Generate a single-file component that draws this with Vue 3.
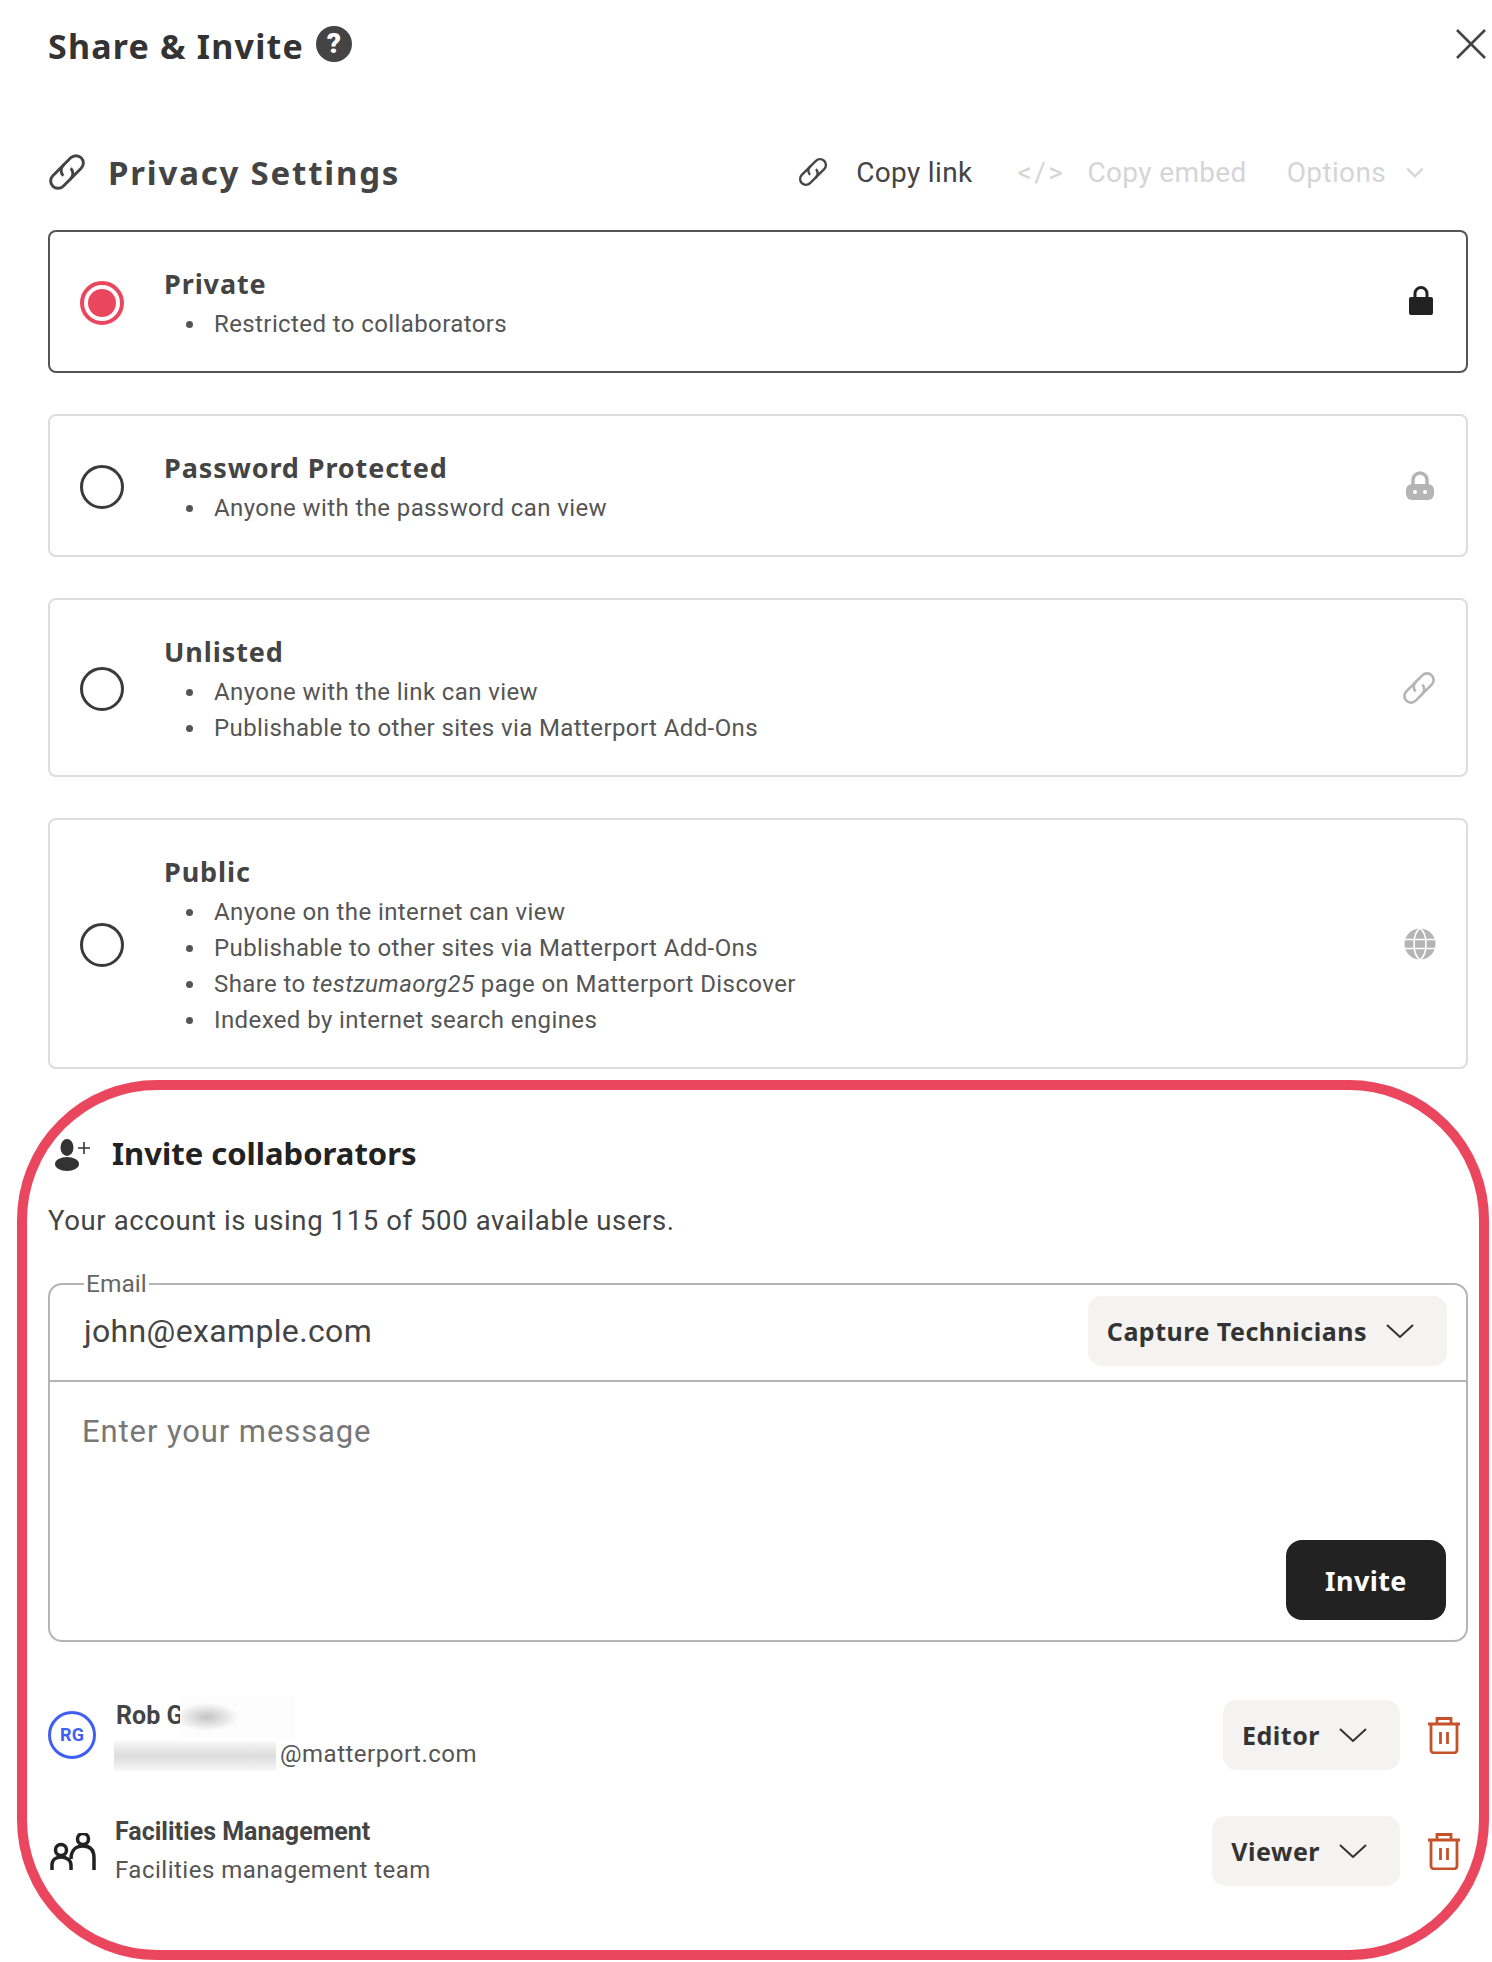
<template>
  <div class="page">
    <header class="top">
      <h1>Share &amp; Invite</h1>
      <span class="help">?</span>
      <svg class="close" viewBox="0 0 32 32"><path d="M2 2 30 30M30 2 2 30" /></svg>
    </header>

    <div class="privacy-head">
      <svg class="link big" viewBox="0 0 36 36"><use href="#link-shape" /></svg>
      <h2>Privacy Settings</h2>
      <div class="actions">
        <svg class="link small" viewBox="0 0 36 36"><use href="#link-shape" /></svg>
        <span class="copy-link">Copy link</span>
        <span class="off code">&lt;/&gt;</span>
        <span class="off embed">Copy embed</span>
        <span class="off options">Options</span>
        <svg class="opt-chev" viewBox="0 0 16 10"><path d="M1 1.5 8 8.5 15 1.5" /></svg>
      </div>
    </div>

    <div class="cards">
      <div v-for="o in options" :key="o.title" class="card" :class="{ active: o.active }">
        <span class="radio"></span>
        <div class="card-body">
          <div class="card-title">{{ o.title }}</div>
          <ul>
            <li v-for="b in o.bullets" :key="b.before">
              {{ b.before }}<i v-if="b.em">{{ b.em }}</i>{{ b.after }}
            </li>
          </ul>
        </div>
        <svg v-if="o.icon === 'lock'" class="ic lock" viewBox="0 0 24 30">
          <path d="M6 13V8.500a6 6 0 0 1 12 0V13" fill="none" stroke="#222" stroke-width="3" />
          <rect x="0" y="12" width="24" height="18" rx="2" fill="#222" />
        </svg>
        <svg v-else-if="o.icon === 'pass'" class="ic pass" viewBox="0 0 30 30">
          <path d="M8 14V9a7 7 0 0 1 14 0v5" fill="none" stroke="#b5b5b5" stroke-width="3.500" />
          <rect x="1" y="13" width="28" height="16" rx="6" fill="#b5b5b5" />
          <circle cx="10" cy="21" r="2" fill="#fff" />
          <circle cx="20" cy="21" r="2" fill="#fff" />
        </svg>
        <svg v-else-if="o.icon === 'link'" class="ic chain" viewBox="0 0 36 36"><use href="#link-shape" /></svg>
        <svg v-else class="ic globe" viewBox="0 0 32 32">
          <circle cx="16" cy="16" r="15.500" fill="#b5b5b5" />
          <path d="M0 11.500h32M0 20.500h32" stroke="#fff" stroke-width="1.600" fill="none" />
          <path d="M16 0c-8 6-8 26 0 32M16 0c8 6 8 26 0 32" stroke="#fff" stroke-width="1.600" fill="none" />
        </svg>
      </div>
    </div>

    <section class="invite">
      <div class="invite-head">
        <svg class="person-add" viewBox="0 0 36 32">
          <ellipse cx="12" cy="8.500" rx="6.500" ry="8.500" fill="#333" />
          <ellipse cx="12" cy="25" rx="12" ry="7" fill="#333" />
          <path d="M29 3v12M23 9h12" stroke="#333" stroke-width="1.600" fill="none" />
        </svg>
        <h3>Invite collaborators</h3>
      </div>
      <p class="usage">Your account is using 115 of 500 available users.</p>

      <fieldset class="form">
        <legend>Email</legend>
        <div class="email-row">
          <span class="email">john@example.com</span>
          <button class="drop">
            Capture Technicians
            <svg viewBox="0 0 28 14"><path d="M1 1 14 13 27 1" /></svg>
          </button>
        </div>
        <div class="message-box">
          <span class="placeholder">Enter your message</span>
          <button class="send">Invite</button>
        </div>
      </fieldset>

      <div class="person rob">
        <span class="avatar">RG</span>
        <div class="who">
          <div class="name">Rob G<span class="name-smudge"></span></div>
          <div class="sub"><span class="mail-smudge"></span>@matterport.com</div>
        </div>
        <button class="drop">
          Editor
          <svg viewBox="0 0 28 14"><path d="M1 1 14 13 27 1" /></svg>
        </button>
        <svg class="trash" viewBox="0 0 34 38"><use href="#trash-shape" /></svg>
      </div>

      <div class="person team">
        <svg class="group" viewBox="0 0 46 38">
          <circle cx="11" cy="17" r="5.500" />
          <circle cx="33" cy="6" r="5.500" />
          <path d="M2 37V32c0-5 4-8 9-8s10 3 10 8v5" />
          <path d="M21 26c0-9 5-13 12-13s11 4 11 12v12" />
        </svg>
        <div class="who">
          <div class="name">Facilities Management</div>
          <div class="sub">Facilities management team</div>
        </div>
        <button class="drop">
          Viewer
          <svg viewBox="0 0 28 14"><path d="M1 1 14 13 27 1" /></svg>
        </button>
        <svg class="trash" viewBox="0 0 34 38"><use href="#trash-shape" /></svg>
      </div>

      <div class="frame"></div>
    </section>

    <svg class="defs" width="0" height="0">
      <defs>
        <g id="link-shape" fill="none" stroke="currentColor" stroke-width="2.800" transform="translate(18 18) rotate(-45)">
          <path d="M3-7H-12A7 7 0 0 0-12 7H-2A7 7 0 0 0 5 0" />
          <path d="M-3 7H12A7 7 0 0 0 12-7H2A7 7 0 0 0-5 0" />
        </g>
        <g id="trash-shape" fill="none" stroke="#c5522a" stroke-width="2.800">
          <path d="M1 8h32M10 8V2.500h14V8M4 8v26a3 3 0 0 0 3 3h20a3 3 0 0 0 3-3V8" />
          <path d="M13.500 16v12M20.500 16v12" />
        </g>
      </defs>
    </svg>
  </div>
</template>

<script setup>
const options = [
  {
    title: "Private",
    active: true,
    icon: "lock",
    bullets: [{ before: "Restricted to collaborators" }],
  },
  {
    title: "Password Protected",
    icon: "pass",
    bullets: [{ before: "Anyone with the password can view" }],
  },
  {
    title: "Unlisted",
    icon: "link",
    bullets: [
      { before: "Anyone with the link can view" },
      { before: "Publishable to other sites via Matterport Add-Ons" },
    ],
  },
  {
    title: "Public",
    icon: "globe",
    bullets: [
      { before: "Anyone on the internet can view" },
      { before: "Publishable to other sites via Matterport Add-Ons" },
      { before: "Share to ", em: "testzumaorg25", after: " page on Matterport Discover" },
      { before: "Indexed by internet search engines" },
    ],
  },
];
</script>

<style>
html,
body {
  margin: 0;
  background: #fff;
}
</style>

<style scoped>
.page {
  width: 1492px;
  height: 1962px;
  box-sizing: border-box;
  padding: 0 24px 0 48px;
  font-family: Roboto, "Liberation Sans", sans-serif;
  color: #333;
  overflow: hidden;
}
.top {
  display: flex;
  align-items: center;
  height: 92px;
}
h1 {
  margin: 0;
  font-family: "Noto Sans", Roboto, sans-serif;
  font-size: 34px;
  font-weight: 700;
  letter-spacing: 1.2px;
  color: #333;
}
.help {
  width: 36px;
  height: 36px;
  margin: -4px 0 0 12px;
  border-radius: 50%;
  background: #444;
  color: #fff;
  font-size: 28px;
  font-weight: 900;
  line-height: 36px;
  text-align: center;
}
.close {
  width: 32px;
  height: 32px;
  margin: -4px -19px 0 auto;
  fill: none;
  stroke: #444;
  stroke-width: 2.6;
}
.privacy-head {
  display: flex;
  align-items: center;
  height: 116px;
  padding-top: 22px;
}
.link {
  color: #444;
}
.link.big {
  width: 38px;
  height: 38px;
}
h2 {
  margin: 0 0 0 22px;
  font-family: "Noto Sans", Roboto, sans-serif;
  font-size: 33px;
  font-weight: 700;
  letter-spacing: 1.8px;
  color: #444;
}
.actions {
  display: flex;
  align-items: center;
  margin-left: auto;
  margin-right: 44px;
  letter-spacing: 0.35px;
}
.link.small {
  width: 30px;
  height: 30px;
}
.copy-link {
  margin-left: 28px;
  font-size: 28px;
  color: #444;
}
.off {
  color: #d5d5d5;
  font-size: 28px;
}
.code {
  margin-left: 45px;
  letter-spacing: 2.5px;
}
.embed {
  margin-left: 22px;
}
.options {
  margin-left: 40px;
}
.opt-chev {
  width: 18px;
  height: 11px;
  margin-left: 20px;
  fill: none;
  stroke: #d5d5d5;
  stroke-width: 2;
}
.cards {
  display: flex;
  flex-direction: column;
  gap: 41px;
}
.card {
  display: flex;
  align-items: center;
  box-sizing: border-box;
  padding: 32px 26px 29px 30px;
  border: 2px solid #ddd;
  border-radius: 8px;
}
.card.active {
  border-color: #555;
}
.radio {
  position: relative;
  flex: none;
  box-sizing: border-box;
  width: 44px;
  height: 44px;
  border: 3.5px solid #3a3a3a;
  border-radius: 50%;
}
.card.active .radio {
  border: 4px solid #ea475f;
}
.card.active .radio::after {
  content: "";
  position: absolute;
  inset: 4px;
  border-radius: 50%;
  background: #ea475f;
}
.card-body {
  flex: 1;
  margin-left: 40px;
}
.card-title {
  font-family: "Noto Sans", Roboto, sans-serif;
  font-size: 27px;
  line-height: 40px;
  font-weight: 700;
  letter-spacing: 0.9px;
  color: #444;
}
ul {
  margin: 2px 0 0;
  padding: 0 0 0 50px;
  list-style: none;
}
li {
  position: relative;
  font-size: 24px;
  line-height: 36px;
  letter-spacing: 0.4px;
  color: #555;
}
li::before {
  content: "";
  position: absolute;
  left: -28px;
  top: 15px;
  width: 7px;
  height: 7px;
  border-radius: 50%;
  background: #555;
}
.ic {
  flex: none;
  margin-top: -3px;
}
.lock {
  width: 24px;
  height: 30px;
  margin-top: -7px;
  margin-right: 7px;
}
.pass {
  width: 30px;
  height: 30px;
  margin-right: 5px;
}
.chain {
  width: 34px;
  height: 34px;
  color: #b5b5b5;
  margin-right: 4px;
}
.globe {
  width: 32px;
  height: 32px;
  margin-right: 4px;
}
.invite {
  position: relative;
  margin-top: 66px;
}
.invite-head {
  display: flex;
  align-items: center;
  height: 40px;
  margin-left: 7px;
}
.person-add {
  width: 36px;
  height: 32px;
}
h3 {
  margin: -4px 0 0 21px;
  font-family: "Noto Sans", Roboto, sans-serif;
  font-size: 31px;
  font-weight: 700;
  color: #222;
}
.usage {
  margin: 28px 0 0;
  font-size: 27.5px;
  line-height: 36px;
  letter-spacing: 0.6px;
  color: #444;
}
.form {
  margin: 31px 0 0;
  padding: 0;
  border: 2px solid #b5b5b5;
  border-radius: 14px;
}
legend {
  margin-left: 34px;
  padding: 0 2px;
  font-size: 24.5px;
  line-height: 28px;
  color: #666;
}
.email-row {
  display: flex;
  align-items: center;
  justify-content: space-between;
  height: 84px;
  padding: 0 19px 17px 34px;
  box-sizing: border-box;
  border-bottom: 2px solid #b5b5b5;
}
.email {
  font-size: 32px;
  letter-spacing: 0.35px;
  color: #444;
}
.drop {
  display: flex;
  flex: none;
  align-items: center;
  gap: 19px;
  height: 70px;
  padding: 0 33px 0 19px;
  border: 0;
  border-radius: 14px;
  background: #f4f3f2;
  font-family: "Noto Sans", Roboto, sans-serif;
  font-size: 25px;
  font-weight: 700;
  letter-spacing: 0.5px;
  color: #333;
}
.drop svg {
  width: 28px;
  height: 14px;
  fill: none;
  stroke: #333;
  stroke-width: 2;
}
.message-box {
  display: flex;
  flex-direction: column;
  height: 258px;
  box-sizing: border-box;
  padding: 31px 20px 20px 32px;
}
.placeholder {
  font-size: 31px;
  letter-spacing: 0.9px;
  color: #777;
}
.send {
  width: 160px;
  height: 80px;
  margin: auto 0 0 auto;
  border: 0;
  border-radius: 16px;
  background: #222;
  color: #fff;
  font-family: "Noto Sans", Roboto, sans-serif;
  font-size: 27px;
  font-weight: 700;
  letter-spacing: 0.4px;
}
.person {
  display: flex;
  align-items: center;
  height: 70px;
}
.person .drop {
  margin-left: auto;
}
.rob {
  margin-top: 58px;
}
.team {
  margin-top: 46px;
}
.avatar {
  flex: none;
  box-sizing: border-box;
  width: 48px;
  height: 48px;
  border: 3px solid #3f5fef;
  border-radius: 50%;
  color: #3f5fef;
  font-size: 18px;
  font-weight: 700;
  line-height: 42px;
  text-align: center;
}
.group {
  flex: none;
  width: 46px;
  height: 38px;
  margin: 2px 0 0 2px;
  fill: none;
  stroke: #222;
  stroke-width: 3.5;
}
.who {
  flex: 1;
  margin-left: 20px;
}
.team .who {
  margin-left: 19px;
}
.name {
  position: relative;
  font-size: 25px;
  line-height: 38px;
  font-weight: 700;
  color: #444;
}
.sub {
  position: relative;
  font-size: 24px;
  line-height: 38px;
  letter-spacing: 0.5px;
  color: #555;
}
.name-smudge {
  position: absolute;
  left: 64px;
  top: -1px;
  width: 115px;
  height: 44px;
  background: radial-gradient(ellipse 32px 14px at 27px 21px, #c4c4c4, #f7f7f7 90%, #fdfdfd);
}
.mail-smudge {
  display: inline-block;
  width: 162px;
  height: 30px;
  margin: 0 4px 0 -2px;
  vertical-align: middle;
  background: linear-gradient(#f8f8f8, #dcdcdc 50%, #f8f8f8);
}
.trash {
  flex: none;
  width: 34px;
  height: 38px;
  margin: 0 7px 0 27px;
}
.frame {
  position: absolute;
  left: -31px;
  right: -21px;
  top: -55px;
  height: 880px;
  box-sizing: border-box;
  border: 10px solid #ea475f;
  border-radius: 140px;
  pointer-events: none;
}
.defs {
  position: absolute;
}
</style>
